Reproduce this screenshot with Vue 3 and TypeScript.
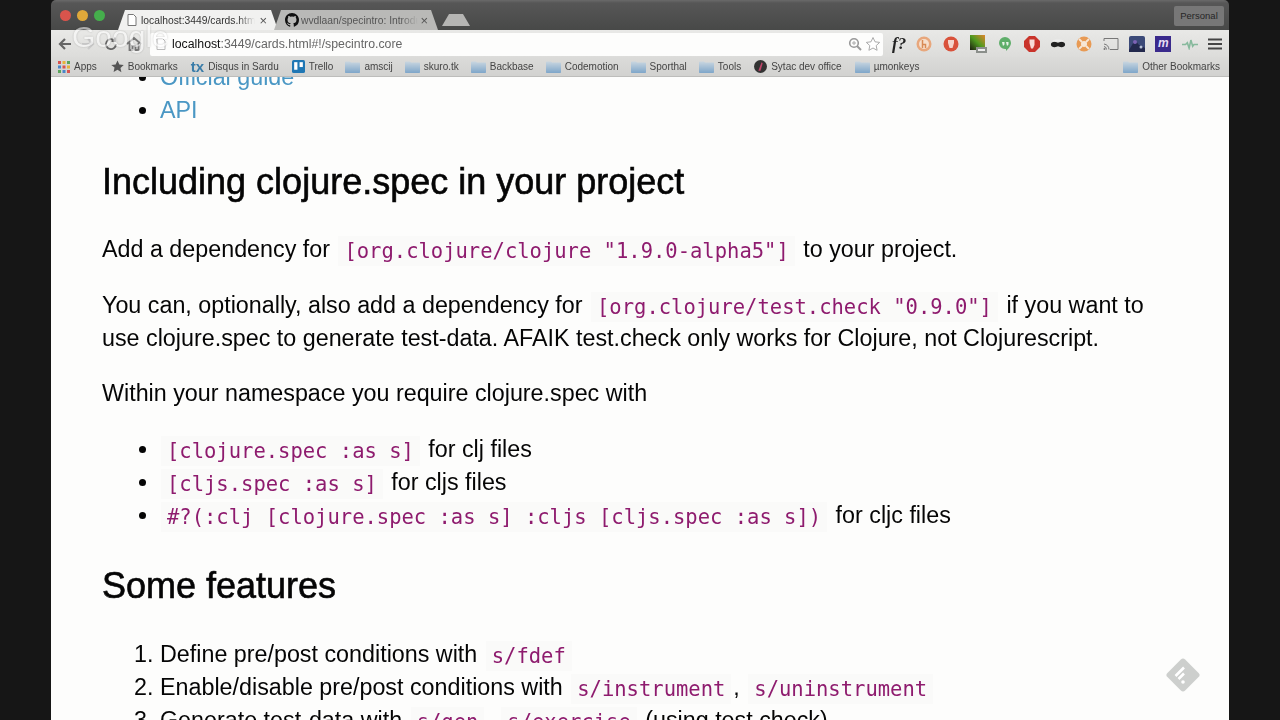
<template>
  <div class="screen">
    <div class="window">
      <!-- Tab strip -->
      <div class="tabstrip">
        <div class="lights">
          <span class="light red"></span>
          <span class="light yellow"></span>
          <span class="light green"></span>
        </div>
        <div class="tab active">
          <svg class="tab-ico" viewBox="0 0 10 12" width="10" height="12">
            <path d="M1 .5h5.5L9 3v8.5H1z" fill="#fff" stroke="#777" stroke-width="1" />
          </svg>
          <span class="tab-title">localhost:3449/cards.html</span>
          <span class="tab-x">×</span>
        </div>
        <div class="tab inactive">
          <svg class="tab-ico" viewBox="0 0 16 16" width="14" height="14">
            <path fill="#111" d="M8 0C3.58 0 0 3.58 0 8c0 3.54 2.29 6.53 5.47 7.59.4.07.55-.17.55-.38v-1.34c-2.23.48-2.7-1.07-2.7-1.07-.36-.92-.89-1.17-.89-1.17-.73-.5.05-.49.05-.49.8.06 1.23.83 1.23.83.71 1.22 1.87.87 2.33.66.07-.52.28-.87.5-1.07-1.78-.2-3.64-.89-3.64-3.95 0-.87.31-1.59.82-2.15-.08-.2-.36-1.02.08-2.12 0 0 .67-.21 2.2.82a7.6 7.6 0 0 1 4 0c1.53-1.04 2.2-.82 2.2-.82.44 1.1.16 1.92.08 2.12.51.56.82 1.27.82 2.15 0 3.07-1.87 3.75-3.65 3.95.29.25.54.73.54 1.48v2.2c0 .21.15.46.55.38A8 8 0 0 0 16 8c0-4.42-3.58-8-8-8z" />
          </svg>
          <span class="tab-title dim">wvdlaan/specintro: Introdu</span>
          <span class="tab-x">×</span>
        </div>
        <div class="tab newtab"></div>
        <div class="person">Personal</div>
      </div>

      <!-- Toolbar -->
      <div class="toolbar">
        <div class="nav">
          <svg viewBox="0 0 16 16" width="16" height="16">
            <path d="M14 8H3M8 3 3 8l5 5" fill="none" stroke="#666" stroke-width="2.2" />
          </svg>
          <svg viewBox="0 0 16 16" width="16" height="16">
            <path d="M2 8h11M8 3l5 5-5 5" fill="none" stroke="#ccc" stroke-width="2.2" />
          </svg>
          <svg viewBox="0 0 16 16" width="16" height="16">
            <path d="M13 8a5 5 0 1 1-1.5-3.5M12 1.500v3.500H8.500" fill="none" stroke="#666" stroke-width="1.800" />
          </svg>
          <svg viewBox="0 0 16 16" width="16" height="16">
            <path d="M1 8l7-6 7 6M3.500 7v7h3v-4h3v4h3V7" fill="none" stroke="#777" stroke-width="1.800" />
          </svg>
        </div>
        <div class="omnibox">
          <svg class="page-ico" viewBox="0 0 10 12" width="10" height="12">
            <path d="M1 .5h5.500L9 3v8.500H1z" fill="#fff" stroke="#bbb" stroke-width="1" />
          </svg>
          <span class="url"><b>localhost</b>:3449/cards.html#!/specintro.core</span>
          <svg class="zoom-ico" viewBox="0 0 14 14" width="14" height="14">
            <circle cx="6" cy="6" r="4.300" fill="none" stroke="#999" stroke-width="1.600" />
            <path d="M9 9l4 4" stroke="#999" stroke-width="2" />
            <path d="M4 6h4M6 4v4" stroke="#aaa" stroke-width="1" />
          </svg>
          <svg viewBox="0 0 16 16" width="16" height="16">
            <path d="M8 1.500l2 4.300 4.700.6-3.500 3.200.9 4.700L8 12l-4.100 2.300.9-4.700L1.300 6.400 6 5.800z" fill="#fff" stroke="#aaa" stroke-width="1" />
          </svg>
        </div>
        <div class="extensions">
          <span class="fq">f?</span>
          <svg viewBox="0 0 16 16" width="16" height="16">
            <circle cx="8" cy="8" r="7.500" fill="#e8a77c" />
            <circle cx="8" cy="8" r="5" fill="#f6dfcd" />
            <path d="M6.500 4v8M6.500 8.500h3v3.500" fill="none" stroke="#d98a55" stroke-width="1.500" />
          </svg>
          <svg viewBox="0 0 16 16" width="16" height="16">
            <circle cx="8" cy="8" r="7.500" fill="#d9523b" />
            <path d="M5 7V4h6v3l-1.500 5h-3z" fill="#f4d5cc" />
          </svg>
          <svg viewBox="0 0 18 18" width="18" height="18">
            <defs>
              <linearGradient id="heat" x1="0" y1="1" x2="1" y2="0">
                <stop offset="0" stop-color="#1c1c10" />
                <stop offset=".5" stop-color="#4f9a1f" />
                <stop offset="1" stop-color="#e0852c" />
              </linearGradient>
            </defs>
            <rect x="1" y="0" width="15" height="15" fill="url(#heat)" />
            <rect x="7" y="12" width="11" height="6" fill="#8b8f8b" />
            <path d="M9 14h7v2H9z" fill="#eee" />
          </svg>
          <svg viewBox="0 0 16 16" width="16" height="16">
            <path d="M8 1a6 6 0 0 1 6 6c0 3-3 6-5 8V13H8A6 6 0 0 1 8 1z" fill="#5fae6a" />
            <path d="M5 6h2.500v2.500L6 10M9 6h2.500v2.500L10 10" fill="#e8f4e8" />
          </svg>
          <svg viewBox="0 0 16 16" width="16" height="16">
            <path d="M5 0h6l5 5v6l-5 5H5l-5-5V5z" fill="#c9342b" />
            <path d="M5.500 7V3.500h5V9l-1.500 3.500H7z" fill="#f7dbd6" />
          </svg>
          <svg viewBox="0 0 18 12" width="16" height="11">
            <path d="M1 6c0-2 2-3 4-3s3 1 4 1 2-1 4-1 4 1 4 3-2 3-4 3-3-1-4-1-2 1-4 1-4-1-4-3z" fill="#222" />
            <path d="M3 1.500c3-1.500 9-1.500 12 0v1H3z" fill="#eee" />
          </svg>
          <svg viewBox="0 0 16 16" width="16" height="16">
            <circle cx="8" cy="8" r="7.500" fill="#e89a54" />
            <circle cx="8" cy="8" r="3" fill="#f7e6d6" />
            <path d="M3 3l3 3M13 3l-3 3M3 13l3-3M13 13l-3-3" stroke="#f7e6d6" stroke-width="1.800" />
          </svg>
          <svg viewBox="0 0 16 14" width="16" height="14">
            <path d="M1 4V1.500h14v11H7" fill="none" stroke="#777" stroke-width="1" />
            <path d="M1 7a6 6 0 0 1 5 5.500M1 9.500A3 3 0 0 1 3.500 12.500" fill="none" stroke="#777" stroke-width="1" />
            <circle cx="1.500" cy="12" r="1" fill="#777" />
          </svg>
          <svg viewBox="0 0 16 16" width="16" height="16">
            <rect width="16" height="16" rx="2" fill="#3c4a78" />
            <path d="M0 14 6 4l4 5 6 3v4H0z" fill="#23294d" />
            <circle cx="6" cy="6" r="2" fill="#7d63b5" />
            <circle cx="12" cy="11" r="1.500" fill="#b9c3d8" />
          </svg>
          <span class="m-ico">m</span>
          <svg viewBox="0 0 18 12" width="16" height="11">
            <path d="M0 6h4l2-2 2 6 2-9 2 7 1.500-2H18" fill="none" stroke="#86b99c" stroke-width="1.800" />
          </svg>
          <svg viewBox="0 0 14 12" width="14" height="12">
            <path d="M0 1.500h14M0 6h14M0 10.500h14" stroke="#444" stroke-width="2.200" />
          </svg>
        </div>
      </div>

      <!-- Bookmarks -->
      <div class="bookmarks">
        <span class="bm">
          <svg viewBox="0 0 12 12" width="12" height="12">
            <g v-for="c in appDots" :key="c.x + '-' + c.y">
              <rect :x="c.x" :y="c.y" width="3" height="3" :fill="c.fill" />
            </g>
          </svg>
          Apps
        </span>
        <span class="bm star">
          <svg viewBox="0 0 14 14" width="13" height="13">
            <path d="M7 .5l2 4.400 4.700.5-3.500 3.200 1 4.700L7 10.500l-4.200 2.300 1-4.700L.3 5.400 5 4.900z" fill="#555" />
          </svg>
          Bookmarks
        </span>
        <span class="bm">
          <span class="tx">tx</span>
          Disqus in Sardu
        </span>
        <span class="bm">
          <svg viewBox="0 0 12 12" width="13" height="13">
            <rect width="12" height="12" rx="1.500" fill="#1f77b4" />
            <rect x="2" y="2" width="3" height="7" fill="#fff" />
            <rect x="7" y="2" width="3" height="4.500" fill="#fff" />
          </svg>
          Trello
        </span>
        <span v-for="name in foldersA" :key="name" class="bm tight">
          <svg class="folder" viewBox="0 0 15 12" width="15" height="12">
            <path d="M0 1.500C0 .8.500.5 1 .5h4l1 1h8c.6 0 1 .4 1 1V11c0 .6-.4 1-1 1H1c-.6 0-1-.4-1-1z" fill="url(#fold)" />
          </svg>
          {{ name }}
        </span>
        <span class="bm">
          <svg viewBox="0 0 12 12" width="13" height="13">
            <circle cx="6" cy="6" r="6" fill="#333" />
            <path d="M4 10l3-8 1 1-2 7z" fill="#c2456b" />
          </svg>
          Sytac dev office
        </span>
        <span class="bm">
          <svg class="folder" viewBox="0 0 15 12" width="15" height="12">
            <path d="M0 1.500C0 .8.500.5 1 .5h4l1 1h8c.6 0 1 .4 1 1V11c0 .6-.4 1-1 1H1c-.6 0-1-.4-1-1z" fill="url(#fold)" />
          </svg>
          µmonkeys
        </span>
        <span class="bm other">
          <svg class="folder" viewBox="0 0 15 12" width="15" height="12">
            <path d="M0 1.500C0 .8.500.5 1 .5h4l1 1h8c.6 0 1 .4 1 1V11c0 .6-.4 1-1 1H1c-.6 0-1-.4-1-1z" fill="url(#fold)" />
          </svg>
          Other Bookmarks
        </span>
        <svg class="defs" width="0" height="0">
          <defs>
            <linearGradient id="fold" x1="0" y1="0" x2="0" y2="1">
              <stop offset="0" stop-color="#c9d6e0" />
              <stop offset="1" stop-color="#7ea6c9" />
            </linearGradient>
          </defs>
        </svg>
      </div>

      <!-- Page -->
      <div class="page">
        <div class="content">
          <ul class="links">
            <li><a>Official guide</a></li>
            <li><a>API</a></li>
          </ul>

          <h2>Including clojure.spec in your project</h2>
          <p>Add a dependency for <code>[org.clojure/clojure "1.9.0-alpha5"]</code> to your project.</p>
          <p>You can, optionally, also add a dependency for <code>[org.clojure/test.check "0.9.0"]</code> if you want to use clojure.spec to generate test-data. AFAIK test.check only works for Clojure, not Clojurescript.</p>
          <p>Within your namespace you require clojure.spec with</p>
          <ul class="files">
            <li><code>[clojure.spec :as s]</code> for clj files</li>
            <li><code>[cljs.spec :as s]</code> for cljs files</li>
            <li><code>#?(:clj [clojure.spec :as s] :cljs [cljs.spec :as s])</code> for cljc files</li>
          </ul>

          <h2>Some features</h2>
          <ol>
            <li>Define pre/post conditions with <code>s/fdef</code></li>
            <li>Enable/disable pre/post conditions with <code>s/instrument</code>, <code>s/uninstrument</code></li>
            <li>Generate test-data with <code>s/gen</code>, <code>s/exercise</code> (using test.check)</li>
          </ol>
        </div>
        <svg class="feedly" viewBox="0 0 36 36" width="36" height="36">
          <rect x="5.500" y="5.500" width="25" height="25" rx="3" transform="rotate(45 18 18)" fill="#cdcfcd" />
          <path d="M10.500 19 19 10.500M13.500 22l5.500-5.500" stroke="#fff" stroke-width="2.600" />
          <circle cx="18" cy="25" r="1.800" fill="#fff" />
        </svg>
      </div>

      <div class="watermark">Google</div>
    </div>
  </div>
</template>

<script setup lang="ts">
const colors = ['#d9534f', '#e8b23a', '#5aa55a', '#4a86c8']

// the 3x3 dots of the Apps launcher
const appDots = [0, 1, 2, 3, 4, 5, 6, 7, 8].map((i) => ({
  x: (i % 3) * 4.5,
  y: Math.floor(i / 3) * 4.5,
  fill: colors[i % colors.length],
}))

const foldersA = ['amscij', 'skuro.tk', 'Backbase', 'Codemotion', 'Sporthal', 'Tools']
</script>

<style>
html,
body {
  margin: 0;
  background: #111;
}
</style>

<style scoped>
.screen {
  width: 1280px;
  height: 720px;
  background: #161616;
  padding: 0 51px;
  box-sizing: border-box;
  overflow: hidden;
}

.window {
  position: relative;
  height: 720px;
  display: flex;
  flex-direction: column;
  border-radius: 5px 5px 0 0;
  overflow: hidden;
  font-family: 'Liberation Sans', Arial, sans-serif;
  filter: blur(0.35px);
}

/* Tab strip */
.tabstrip {
  height: 30px;
  flex: none;
  display: flex;
  align-items: flex-end;
  background: linear-gradient(#6a6a6a 0, #565656 3px, #484948 100%);
  padding-left: 9px;
  box-sizing: border-box;
}

.lights {
  display: flex;
  gap: 6px;
  align-self: flex-start;
  margin-top: 10px;
  width: 58px;
  flex: none;
}

.light {
  width: 11px;
  height: 11px;
  border-radius: 50%;
}

.red { background: #d9544c; }
.yellow { background: #dfa83a; }
.green { background: #45ae4c; }

.tab {
  height: 20px;
  display: flex;
  align-items: center;
  gap: 4px;
  font-size: 10.3px;
  box-sizing: border-box;
  clip-path: polygon(0 100%, 7px 0, calc(100% - 7px) 0, 100% 100%);
  flex: none;
}

.active {
  width: 160px;
  padding: 0 11px 0 9px;
  background: #f1f1f0;
  color: #333;
}

.inactive {
  width: 164px;
  margin-left: -4px;
  padding: 0 10px 0 11px;
  background: #b9b9b7;
  color: #555;
  gap: 2px;
}

.tab-ico {
  flex: none;
}

.tab-title {
  flex: 1;
  white-space: nowrap;
  overflow: hidden;
  -webkit-mask-image: linear-gradient(to right, #000 85%, transparent);
  mask-image: linear-gradient(to right, #000 85%, transparent);
}

.tab-x {
  font-size: 13px;
  color: #555;
  line-height: 1;
}

.newtab {
  width: 28px;
  height: 12px;
  margin-left: 4px;
  background: #b5b5b3;
  margin-bottom: 4px;
}

.person {
  margin-left: auto;
  margin-right: 5px;
  align-self: flex-start;
  margin-top: 6px;
  width: 50px;
  height: 20px;
  background: #777;
  color: #262626;
  font-size: 9.5px;
  line-height: 20px;
  text-align: center;
  border-radius: 2px;
}

/* Toolbar */
.toolbar {
  height: 27px;
  flex: none;
  display: flex;
  align-items: center;
  background: linear-gradient(#e9e9e7, #dcdcda);
  box-sizing: border-box;
  padding: 1px 0 0 6px;
}

.nav {
  display: flex;
  align-items: center;
  gap: 7px;
  width: 93px;
  flex: none;
}

.omnibox {
  width: 733px;
  height: 23px;
  flex: none;
  display: flex;
  align-items: center;
  gap: 3px;
  background: #fdfdfc;
  border-radius: 2px;
  padding: 0 2px 0 6px;
  box-sizing: border-box;
}

.page-ico {
  margin-right: 3px;
}

.url {
  flex: 1;
  font-size: 12.3px;
  color: #666;
  white-space: nowrap;
}

.url b {
  font-weight: normal;
  color: #111;
}

.extensions {
  flex: 1;
  display: flex;
  align-items: center;
  justify-content: space-between;
  padding: 0 7px 0 9px;
}

.fq {
  font-family: 'Liberation Serif', serif;
  font-style: italic;
  font-weight: bold;
  font-size: 17px;
  color: #222;
}

.m-ico {
  width: 16px;
  height: 16px;
  background: #3a2a8c;
  color: #e6dcf5;
  font-size: 12px;
  font-weight: bold;
  font-style: italic;
  line-height: 15px;
  text-align: center;
}

/* Bookmarks */
.bookmarks {
  height: 20px;
  flex: none;
  display: flex;
  align-items: center;
  gap: 13px;
  padding-left: 7px;
  background: linear-gradient(#dbdbd9, #d2d2d0);
  border-bottom: 1px solid #bdbdbb;
  box-sizing: border-box;
  font-size: 10px;
  color: #444;
}

.bm {
  display: flex;
  align-items: center;
  gap: 4px;
  white-space: nowrap;
}

.star {
  margin-left: 1px;
}

.tight {
  margin-left: -1px;
}

.other {
  margin-left: auto;
  margin-right: 9px;
}

.defs {
  position: absolute;
}

.tx {
  color: #3a7ca8;
  font-size: 15px;
  font-weight: bold;
  line-height: 1;
}

/* Page */
.page {
  position: relative;
  flex: 1;
  min-height: 0;
  overflow: hidden;
  background: #fdfdfc;
}

.content {
  margin-top: -16px;
  padding: 0 51px;
  color: #050505;
  font-size: 23.3px;
  line-height: 33px;
}

h2 {
  font-size: 36px;
  font-weight: normal;
  line-height: 40px;
  margin: 34.5px 0 31.5px;
  -webkit-text-stroke: 0.6px #050505;
}

p {
  margin: 0 0 22.5px;
}

ul,
ol {
  margin: 0;
  padding-left: 58px;
}

.links a {
  color: #4a97c4;
}

.files code {
  margin-left: 1px;
}

code {
  font-family: 'DejaVu Sans Mono', monospace;
  font-size: 20.5px;
  line-height: 1;
  vertical-align: -1px;
  color: #8e1b6e;
  background: #fafaf9;
  padding: 3px 6px;
  margin: 0 2px;
}

/* Feedly button */
.feedly {
  position: absolute;
  right: 28px;
  bottom: 27px;
}

/* Broadcast logo over the browser chrome */
.watermark {
  position: absolute;
  left: 21px;
  top: 19px;
  font-size: 30px;
  line-height: 36px;
  color: #fff;
  opacity: 0.55;
  text-shadow: 0 0 2px rgba(0, 0, 0, 0.4);
}
</style>
